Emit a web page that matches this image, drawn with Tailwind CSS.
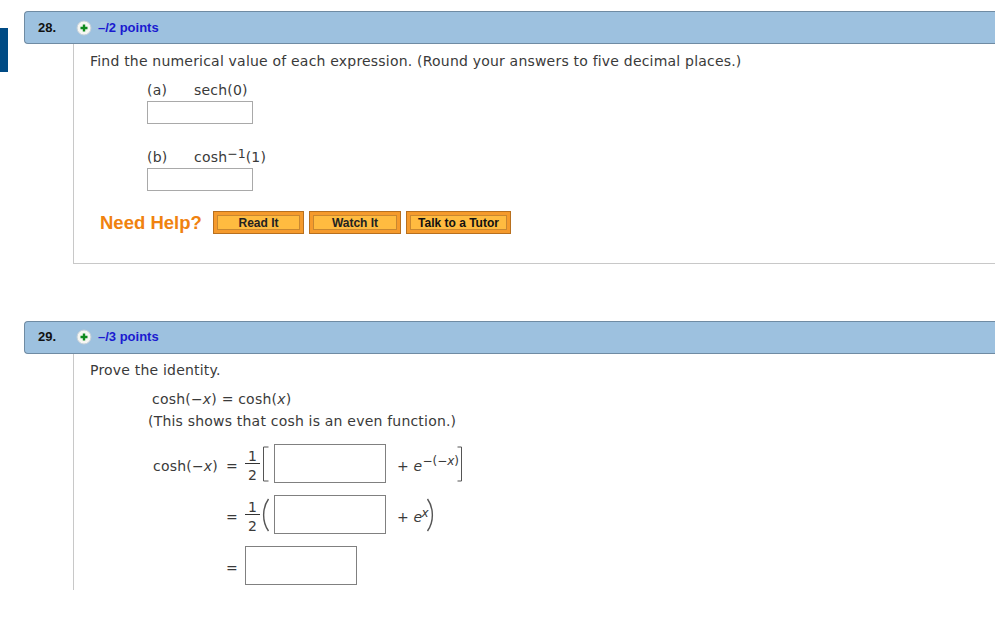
<!DOCTYPE html>
<html><head><meta charset="utf-8"><script src="https://cdn.jsdelivr.net/npm/@tailwindcss/browser@4"></script></head>
<body class="bg-white overflow-hidden">
<div class="relative w-[995px] h-[620px] overflow-hidden pt-[11px] pl-[24px] font-['DejaVu_Sans',sans-serif] text-[14px] tracking-[0.2px] text-[#3a3a3a]">
<div class="absolute left-0 top-[28px] w-[8px] h-[44px] bg-[#004b85]"></div>

<section>
<div class="h-[33px] bg-[#9dc1df] border border-[#6f8ba3] border-r-0 rounded-l-[4px] flex items-center font-['Liberation_Sans',sans-serif] font-bold text-[13px] tracking-normal">
<span class="w-[51px] pl-[13px] text-[#111]">28.</span>
<svg width="16" height="16" viewBox="0 0 16 16" class="mr-[6px]"><circle cx="8" cy="8" r="7" fill="#f6f6f2" stroke="#c4d0da"/><path d="M8 4.5v7M4.5 8h7" stroke="#0f8a1e" stroke-width="2.4"/></svg>
<span class="text-[#1a1ad0]">–/2 points</span>
</div>
<div class="ml-[49px] h-[220px] border-l border-b border-[#c8c8c8] pl-[16px]">
<p class="pt-[9px] leading-[16px]">Find the numerical value of each expression. (Round your answers to five decimal places.)</p>
<div class="ml-[57px] mt-[13px]">
<div class="leading-[16px] flex"><span class="w-[47px]">(a)</span><span>sech(0)</span></div>
<div class="mt-[3px] w-[106px] h-[23px] border border-[#a9a9a9]"></div>
<div class="mt-[25px] leading-[16px] flex"><span class="w-[47px]">(b)</span><span>cosh<sup class="text-[12.5px] tracking-normal -top-[4px]">−1</sup>(1)</span></div>
<div class="mt-[3px] w-[106px] h-[23px] border border-[#a9a9a9]"></div>
</div>
<div class="flex items-center mt-[18px] ml-[10px] font-['Liberation_Sans',sans-serif] font-bold tracking-normal">
<span class="w-[113px] text-[18.5px] text-[#f0820f]">Need Help?</span>
<button class="w-[91px] h-[23px] mr-[5px] bg-[#f59a2c] border border-[#b8701f] p-[3px] text-[12px] text-[#222]"><span class="flex items-center justify-center h-full bg-[#ffbb40] border border-[#c98730]">Read It</span></button>
<button class="w-[92px] h-[23px] mr-[5px] bg-[#f59a2c] border border-[#b8701f] p-[3px] text-[12px] text-[#222]"><span class="flex items-center justify-center h-full bg-[#ffbb40] border border-[#c98730]">Watch It</span></button>
<button class="w-[105px] h-[23px] bg-[#f59a2c] border border-[#b8701f] p-[3px] text-[12px] text-[#111]"><span class="flex items-center justify-center h-full bg-[#ffbb40] border border-[#c98730]">Talk to a Tutor</span></button>
</div>
</div>
</section>

<section class="mt-[57px]">
<div class="h-[33px] bg-[#9dc1df] border border-[#6f8ba3] border-r-0 rounded-l-[4px] flex items-center font-['Liberation_Sans',sans-serif] font-bold text-[13px] tracking-normal pb-[1px]">
<span class="w-[51px] pl-[13px] text-[#111]">29.</span>
<svg width="16" height="16" viewBox="0 0 16 16" class="mr-[6px]"><circle cx="8" cy="8" r="7" fill="#f6f6f2" stroke="#c4d0da"/><path d="M8 4.5v7M4.5 8h7" stroke="#0f8a1e" stroke-width="2.4"/></svg>
<span class="text-[#1a1ad0]">–/3 points</span>
</div>
<div class="ml-[49px] h-[236px] border-l border-[#c8c8c8] pl-[16px]">
<p class="pt-[8px] leading-[16px]">Prove the identity.</p>
<div class="ml-[62px] mt-[13px] leading-[16px]">cosh(−<i>x</i>) = cosh(<i>x</i>)</div>
<div class="ml-[58px] mt-[6px] leading-[16px]">(This shows that cosh is an even function.)</div>

<div class="flex items-center h-[39px] mt-[15px] ml-[63px]">
<span class="w-[73px] whitespace-nowrap pt-[5px]">cosh(−<i>x</i>)</span><span class="w-[19px] pt-[5px]">=</span>
<span class="flex flex-col items-center self-start mt-[6px] w-[15px] text-[14px]"><span class="border-b border-[#333] w-full text-center leading-[13px]">1</span><span class="pt-[3px] leading-[17px]">2</span></span>
<svg width="8" height="38" viewBox="0 0 8 38" class="ml-[2px]"><path d="M6.5 2H1.5v34H6.5" fill="none" stroke="#555"/></svg>
<div class="ml-[4px] w-[112px] h-[39px] border border-[#808080]"></div>
<span class="ml-[11px] whitespace-nowrap pt-[5px]">+ <i>e</i><sup class="text-[12px] tracking-normal -top-[6px]">−(−<i>x</i>)</sup></span>
<svg width="8" height="38" viewBox="0 0 8 38" class="-ml-[3px]"><path d="M1.5 2H5.5v34H1.5" fill="none" stroke="#555"/></svg>
</div>

<div class="flex items-center h-[39px] mt-[12px] ml-[136px]">
<span class="w-[19px] pt-[5px]">=</span>
<span class="flex flex-col items-center self-start mt-[6px] w-[15px] text-[14px]"><span class="border-b border-[#333] w-full text-center leading-[13px]">1</span><span class="pt-[3px] leading-[17px]">2</span></span>
<svg width="8" height="36" viewBox="0 0 8 36" class="ml-[2px]"><path d="M6.5 2C0 11 0 25 6.5 34" fill="none" stroke="#555" stroke-width="1.4"/></svg>
<div class="ml-[4px] w-[112px] h-[39px] border border-[#808080]"></div>
<span class="ml-[11px] whitespace-nowrap pt-[5px]">+ <i>e</i><sup class="text-[12px] tracking-normal -top-[5px] -ml-[1px]"><i>x</i></sup></span>
<svg width="9" height="36" viewBox="0 0 9 36" class="ml-[-3px]"><path d="M1.5 2C8 11 8 25 1.5 34" fill="none" stroke="#555" stroke-width="1.4"/></svg>
</div>

<div class="flex items-center h-[39px] mt-[12px] ml-[136px]">
<span class="w-[19px] pt-[5px]">=</span>
<div class="ml-[-0.5px] w-[112px] h-[39px] border border-[#808080]"></div>
</div>
</div>
</section>
</div>
</body></html>
